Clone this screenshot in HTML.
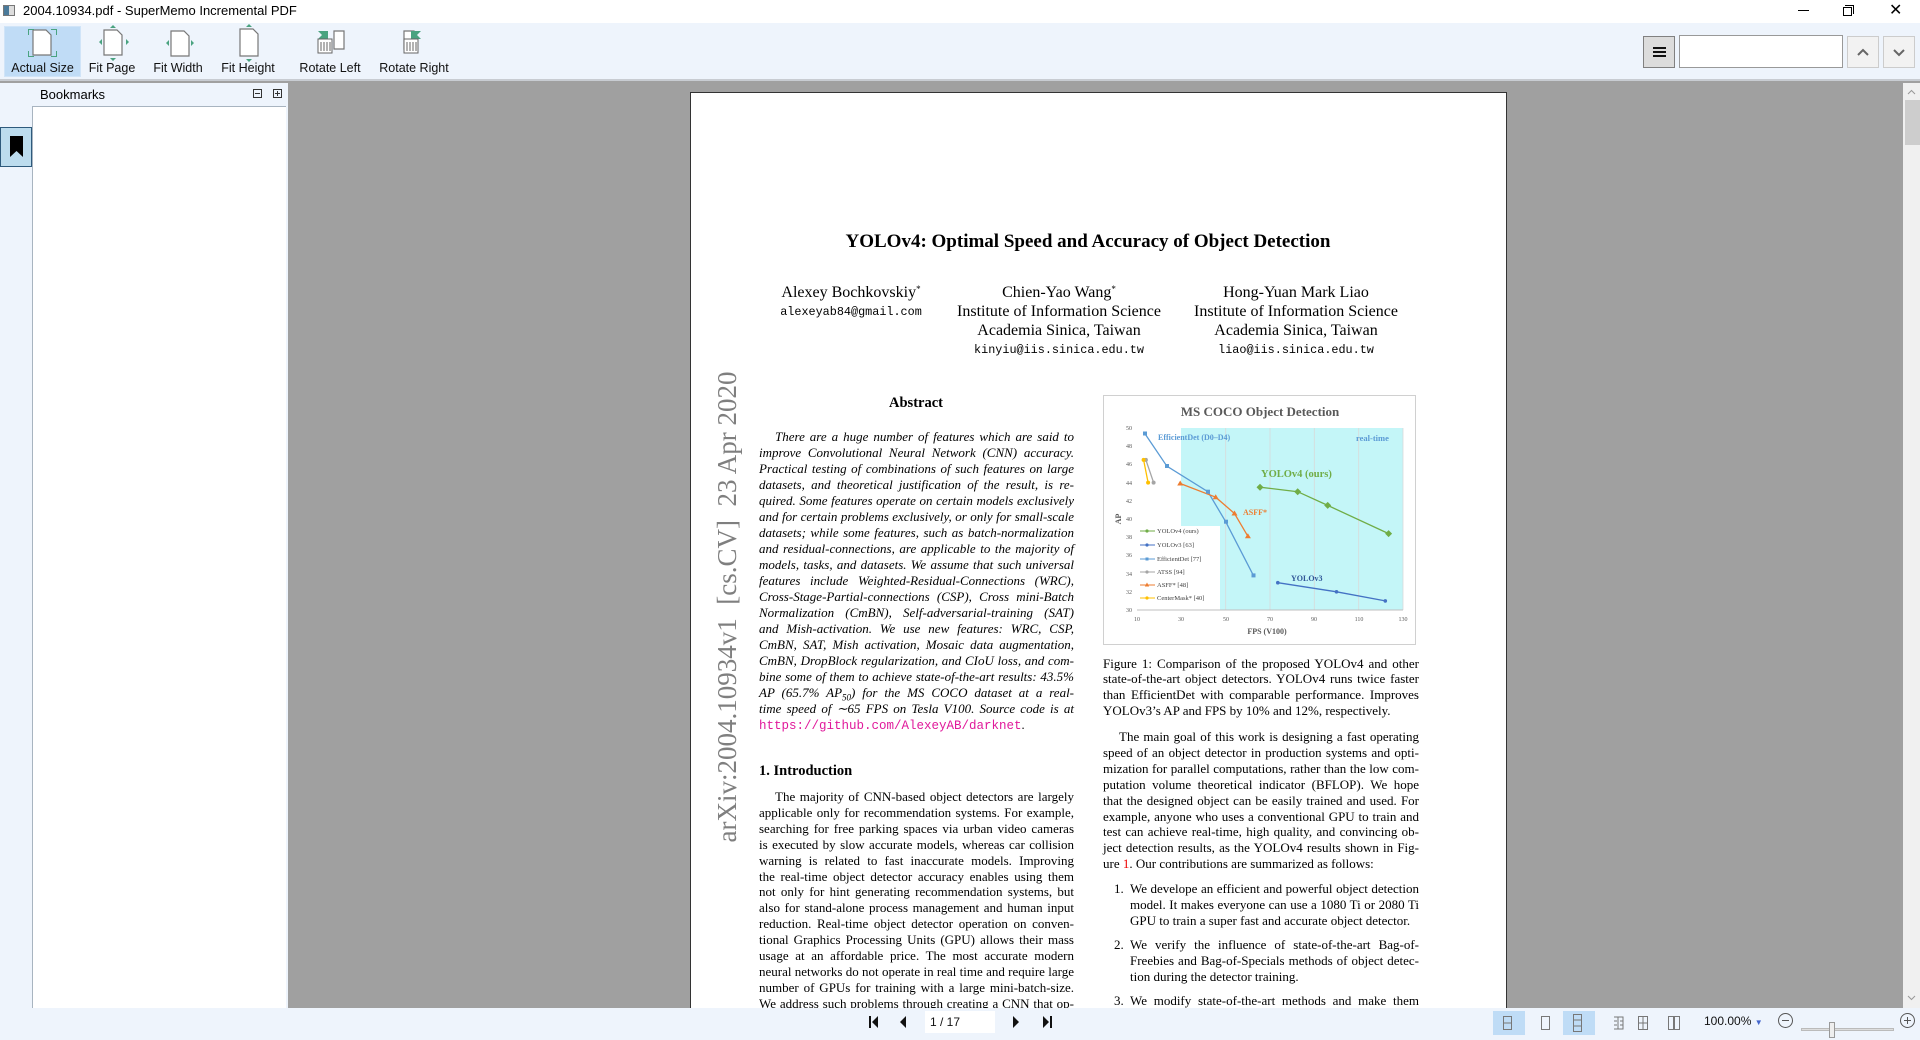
<!DOCTYPE html>
<html><head><meta charset="utf-8"><style>
*{margin:0;padding:0;box-sizing:border-box}
body{width:1920px;height:1040px;overflow:hidden;position:relative;background:#a0a0a0;font-family:"Liberation Sans",sans-serif}
.abs{position:absolute}
.tb{font-size:12.5px;color:#111;text-align:center;position:absolute;top:61px}
#page{position:absolute;left:690px;top:92px;width:817px;height:916px;background:#fff;border:1px solid #333;border-bottom:none;overflow:hidden;font-family:"Liberation Serif",serif;color:#000}
#page div{position:absolute;white-space:nowrap}
.a,.b,.c{height:16px;line-height:16px;font-size:13px;text-align:justify;text-align-last:justify}
.a{left:68px;width:315px}
.a.i{font-style:italic}
.b{left:412px;width:316px}
.c{left:439px;width:289px}
.n{left:423px;font-size:13px;height:16px;line-height:16px}
.ll{text-align-last:left!important;text-align:left!important}
.au{font-size:16px;text-align:center;width:260px;height:20px;line-height:20px}
.au sup{font-size:9px;vertical-align:top;line-height:12px}
.em{font-family:"Liberation Mono",monospace;font-size:11.8px;text-align:center;width:260px;height:16px;line-height:16px}
</style></head><body>
<!-- title bar -->
<div class="abs" style="left:0;top:0;width:1920px;height:23px;background:#fff"></div>
<div class="abs" style="left:3px;top:5px;width:12px;height:11px;border:1px solid #777;background:linear-gradient(90deg,#4a7a9a 50%,#ddd 50%)"></div>
<div class="abs" style="left:23px;top:3px;font-size:13px;color:#000">2004.10934.pdf - SuperMemo Incremental PDF</div>
<div class="abs" style="left:1798px;top:10px;width:11px;height:1px;background:#000"></div>
<div class="abs" style="left:1845px;top:5px;width:9px;height:9px;border:1px solid #000;border-left:none;border-bottom:none"></div>
<div class="abs" style="left:1843px;top:7px;width:9px;height:9px;border:1px solid #000;background:#fff"></div>
<div class="abs" style="left:1889px;top:0px;font-size:16px;color:#000">✕</div>
<!-- toolbar -->
<div class="abs" style="left:0;top:23px;width:1920px;height:58px;background:#eef4fc;border-bottom:2px solid #c8ccd2"></div>
<div class="abs" style="left:4px;top:26px;width:77px;height:51px;background:#c0dcf6;border:1px solid #d0e4f8"></div>
<svg class="abs" style="left:0;top:23px" width="450" height="40">
 <g fill="#fff" stroke="#777" stroke-width="1.2">
  <path d="M33 7h13l5 5v20h-18z"/><path d="M104 7h13l5 5v20h-18z"/><path d="M171 8h13l5 5v20h-18z"/><path d="M240 6h13l5 5v22h-18z"/>
  <path d="M334 8h10v18h-10z"/><path d="M404 8h10v18h-10z"/>
 </g>
 <g fill="#4aa380">
  <path d="M28 6h6v1h-5v5h-1zM51 6h6v6h-1v-5h-5zM28 34h6v-1h-5v-5h-1zM51 34h6v-6h-1v5h-5z"/>
  <path d="M113 2l3 3h-6zM113 38l3-3h-6zM99 19l3-3v6zM129 19l-3-3v6z"/>
  <path d="M166 20l3-3v6zM194 20l-3-3v6z"/>
  <path d="M249 1l3 3h-6zM249 39l3-3h-6z"/>
  <path d="M318 8h10v8h-10l4-4zM421 8h-10v8h10l-4-4z"/>
 </g>
 <g fill="#fff" stroke="#666"><rect x="318" y="16" width="14" height="14"/><rect x="404" y="16" width="14" height="14"/></g>
 <g stroke="#666"><path d="M321 19v9M324 19v9M327 19v9M330 19v9M407 19v9M410 19v9M413 19v9M416 19v9"/></g>
</svg>
<div class="tb" style="left:4px;width:77px">Actual Size</div>
<div class="tb" style="left:82px;width:60px">Fit Page</div>
<div class="tb" style="left:145px;width:66px">Fit Width</div>
<div class="tb" style="left:214px;width:68px">Fit Height</div>
<div class="tb" style="left:294px;width:72px">Rotate Left</div>
<div class="tb" style="left:372px;width:84px">Rotate Right</div>
<div class="abs" style="left:1643px;top:36px;width:32px;height:32px;background:#dcdcdc;border:1px solid #808080"></div>
<div class="abs" style="left:1653px;top:47px;width:13px;height:10px;border-top:2px solid #111;border-bottom:2px solid #111"></div>
<div class="abs" style="left:1653px;top:51px;width:13px;height:2px;background:#111"></div>
<div class="abs" style="left:1679px;top:35px;width:164px;height:33px;background:#fff;border:1px solid #999"></div>
<svg class="abs" style="left:1847px;top:36px" width="68" height="32">
<rect x="0.5" y="0.5" width="31" height="31" fill="#f2f2f2" stroke="#ccc"/><rect x="36.5" y="0.5" width="31" height="31" fill="#f2f2f2" stroke="#ccc"/>
<path d="M11 19l5-5 5 5M47 14l5 5 5-5" fill="none" stroke="#666" stroke-width="2"/></svg>
<!-- left panel -->
<div class="abs" style="left:0;top:83px;width:288px;height:925px;background:#eef4fc"></div>
<div class="abs" style="left:40px;top:87px;font-size:13px;color:#000">Bookmarks</div>
<div class="abs" style="left:253px;top:89px;width:9px;height:9px;border:1px solid #333"><div class="abs" style="left:1px;top:3px;width:5px;height:1px;background:#333"></div></div>
<div class="abs" style="left:273px;top:89px;width:9px;height:9px;border:1px solid #333"><div class="abs" style="left:1px;top:3px;width:5px;height:1px;background:#333"></div><div class="abs" style="left:3px;top:1px;width:1px;height:5px;background:#333"></div></div>
<div class="abs" style="left:32px;top:106px;width:254px;height:902px;background:#fff;border-top:1px solid #a8b4c0;border-left:1px solid #a8b4c0"></div>
<div class="abs" style="left:0;top:127px;width:32px;height:40px;background:#bcdcee;border:1px solid #2e5a7c"></div>
<svg class="abs" style="left:10px;top:136px" width="14" height="22"><path d="M0 0h13v21l-6.5-6-6.5 6z" fill="#000"/></svg>
<!-- scrollbar -->
<div class="abs" style="left:1903px;top:83px;width:17px;height:925px;background:#f0f0f0"></div>
<div class="abs" style="left:1905px;top:100px;width:15px;height:45px;background:#cdcdcd"></div>
<svg class="abs" style="left:1903px;top:83px" width="17" height="925"><path d="M5 11l3.5-3.5 3.5 3.5M5 913l3.5 3.5 3.5-3.5" fill="none" stroke="#999"/></svg>
<!-- page -->
<div id="page">
<div style="left:0;width:794px;top:138px;text-align:center;font-weight:bold;font-size:19px;line-height:22px">YOLOv4: Optimal Speed and Accuracy of Object Detection</div>
<div class="au" style="left:30px;top:190px">Alexey Bochkovskiy<sup>*</sup></div>
<div class="em" style="left:30px;top:211px">alexeyab84@gmail.com</div>
<div class="au" style="left:238px;top:190px">Chien-Yao Wang<sup>*</sup></div>
<div class="au" style="left:238px;top:209px">Institute of Information Science</div>
<div class="au" style="left:238px;top:228px">Academia Sinica, Taiwan</div>
<div class="em" style="left:238px;top:249px">kinyiu@iis.sinica.edu.tw</div>
<div class="au" style="left:475px;top:190px">Hong-Yuan Mark Liao</div>
<div class="au" style="left:475px;top:209px">Institute of Information Science</div>
<div class="au" style="left:475px;top:228px">Academia Sinica, Taiwan</div>
<div class="em" style="left:475px;top:249px">liao@iis.sinica.edu.tw</div>
<div style="left:36px;top:514px;transform:translate(-50%,-50%) rotate(-90deg);font-size:27px;color:#7f7f7f;line-height:30px">arXiv:2004.10934v1&nbsp; [cs.CV]&nbsp; 23 Apr 2020</div>
<div style="left:125px;width:200px;top:302px;text-align:center;font-weight:bold;font-size:14.5px">Abstract</div>
<div class="a i" style="top:336px;left:84px;width:299px">There are a huge number of features which are said to</div>
<div class="a i" style="top:352px">improve Convolutional Neural Network (CNN) accuracy.</div>
<div class="a i" style="top:368px">Practical testing of combinations of such features on large</div>
<div class="a i" style="top:384px">datasets, and theoretical justification of the result, is re-</div>
<div class="a i" style="top:400px">quired. Some features operate on certain models exclusively</div>
<div class="a i" style="top:416px">and for certain problems exclusively, or only for small-scale</div>
<div class="a i" style="top:432px">datasets; while some features, such as batch-normalization</div>
<div class="a i" style="top:448px">and residual-connections, are applicable to the majority of</div>
<div class="a i" style="top:464px">models, tasks, and datasets. We assume that such universal</div>
<div class="a i" style="top:480px">features include Weighted-Residual-Connections (WRC),</div>
<div class="a i" style="top:496px">Cross-Stage-Partial-connections (CSP), Cross mini-Batch</div>
<div class="a i" style="top:512px">Normalization (CmBN), Self-adversarial-training (SAT)</div>
<div class="a i" style="top:528px">and Mish-activation. We use new features: WRC, CSP,</div>
<div class="a i" style="top:544px">CmBN, SAT, Mish activation, Mosaic data augmentation,</div>
<div class="a i" style="top:560px">CmBN, DropBlock regularization, and CIoU loss, and com-</div>
<div class="a i" style="top:576px">bine some of them to achieve state-of-the-art results: 43.5%</div>
<div class="a i" style="top:592px">AP (65.7% AP<sub style="font-size:9px">50</sub>) for the MS COCO dataset at a real-</div>
<div class="a i" style="top:608px">time speed of ∼65 FPS on Tesla V100. Source code is at</div>
<div class="a ll" style="top:624px;font-family:'Liberation Mono',monospace;font-size:12.5px;color:#e0199b">https://github.com/AlexeyAB/darknet<span style="color:#000;font-family:'Liberation Serif',serif">.</span></div>
<div style="left:68px;top:668px;font-weight:bold;font-size:14.5px;line-height:20px">1. Introduction</div>
<div class="a" style="top:696px;left:84px;width:299px">The majority of CNN-based object detectors are largely</div>
<div class="a" style="top:711.9px">applicable only for recommendation systems. For example,</div>
<div class="a" style="top:727.8px">searching for free parking spaces via urban video cameras</div>
<div class="a" style="top:743.7px">is executed by slow accurate models, whereas car collision</div>
<div class="a" style="top:759.6px">warning is related to fast inaccurate models. Improving</div>
<div class="a" style="top:775.5px">the real-time object detector accuracy enables using them</div>
<div class="a" style="top:791.4px">not only for hint generating recommendation systems, but</div>
<div class="a" style="top:807.3px">also for stand-alone process management and human input</div>
<div class="a" style="top:823.2px">reduction. Real-time object detector operation on conven-</div>
<div class="a" style="top:839.1px">tional Graphics Processing Units (GPU) allows their mass</div>
<div class="a" style="top:855px">usage at an affordable price. The most accurate modern</div>
<div class="a" style="top:870.9px">neural networks do not operate in real time and require large</div>
<div class="a" style="top:886.8px">number of GPUs for training with a large mini-batch-size.</div>
<div class="a" style="top:902.7px">We address such problems through creating a CNN that op-</div>
<div class="b" style="top:562.5px">Figure 1: Comparison of the proposed YOLOv4 and other</div>
<div class="b" style="top:578.4px">state-of-the-art object detectors. YOLOv4 runs twice faster</div>
<div class="b" style="top:594.3px">than EfficientDet with comparable performance. Improves</div>
<div class="b ll" style="top:610.2px">YOLOv3’s AP and FPS by 10% and 12%, respectively.</div>
<div class="b" style="top:636px;left:428px;width:300px">The main goal of this work is designing a fast operating</div>
<div class="b" style="top:651.9px">speed of an object detector in production systems and opti-</div>
<div class="b" style="top:667.8px">mization for parallel computations, rather than the low com-</div>
<div class="b" style="top:683.7px">putation volume theoretical indicator (BFLOP). We hope</div>
<div class="b" style="top:699.6px">that the designed object can be easily trained and used. For</div>
<div class="b" style="top:715.5px">example, anyone who uses a conventional GPU to train and</div>
<div class="b" style="top:731.4px">test can achieve real-time, high quality, and convincing ob-</div>
<div class="b" style="top:747.3px">ject detection results, as the YOLOv4 results shown in Fig-</div>
<div class="b ll" style="top:763.2px">ure <span style="color:#e00">1</span>. Our contributions are summarized as follows:</div>
<div class="n" style="top:788px">1.</div>
<div class="c" style="top:788px">We develope an efficient and powerful object detection</div>
<div class="c" style="top:804px">model. It makes everyone can use a 1080 Ti or 2080 Ti</div>
<div class="c ll" style="top:820px">GPU to train a super fast and accurate object detector.</div>
<div class="n" style="top:844px">2.</div>
<div class="c" style="top:844px">We verify the influence of state-of-the-art Bag-of-</div>
<div class="c" style="top:860px">Freebies and Bag-of-Specials methods of object detec-</div>
<div class="c ll" style="top:876px">tion during the detector training.</div>
<div class="n" style="top:900px">3.</div>
<div class="c" style="top:900px">We modify state-of-the-art methods and make them</div>
<svg style="position:absolute;left:0;top:0" width="817" height="916" font-family="Liberation Serif,serif">
<g transform="translate(-691,-92)">
<rect x="1103.5" y="394.5" width="312" height="249" fill="#fff" stroke="#d0d0d0"/>
<text x="1260" y="415" text-anchor="middle" font-size="13" font-weight="bold" fill="#595959">MS COCO Object Detection</text>
<rect x="1181" y="427" width="222" height="182" fill="#c4f6f8"/>
<rect x="1137" y="525" width="83" height="84" fill="#fff"/>
<g stroke="#d9d9d9" stroke-width="0.8"><path d="M1225.7 427V609M1270 427V609M1314.3 427V609M1358.7 427V609M1403 427V609"/></g>
<path d="M1137 609H1403" stroke="#bfbfbf"/>
<g font-size="6" fill="#595959" text-anchor="end">
<text x="1132" y="429">50</text><text x="1132" y="447">48</text><text x="1132" y="465">46</text><text x="1132" y="484">44</text><text x="1132" y="502">42</text><text x="1132" y="520">40</text><text x="1132" y="538">38</text><text x="1132" y="556">36</text><text x="1132" y="575">34</text><text x="1132" y="593">32</text><text x="1132" y="611">30</text></g>
<g font-size="6" fill="#595959" text-anchor="middle">
<text x="1137" y="620">10</text><text x="1181" y="620">30</text><text x="1226" y="620">50</text><text x="1270" y="620">70</text><text x="1314" y="620">90</text><text x="1359" y="620">110</text><text x="1403" y="620">130</text></g>
<text x="1267" y="633" font-size="8" font-weight="bold" fill="#595959" text-anchor="middle">FPS (V100)</text>
<text transform="translate(1121,518) rotate(-90)" font-size="8" font-weight="bold" fill="#595959" text-anchor="middle">AP</text>
<g fill="none" stroke-width="1.3">
<polyline points="1144.8,432.5 1166.9,465.2 1207.9,490.7 1225.7,520.7 1253.4,574.4" stroke="#5b9bd5"/>
<polyline points="1145.9,458.9 1153.6,481.6" stroke="#a5a5a5"/>
<polyline points="1143.6,458.9 1148.1,481.6" stroke="#ffc000"/>
<polyline points="1180.2,482.5 1215.7,496.2 1234.5,512.5 1247.9,535.3" stroke="#ed7d31"/>
<polyline points="1260,486.2 1297.7,490.7 1327.7,504.4 1388.6,532.6" stroke="#70ad47"/>
<polyline points="1277.8,581.7 1336.5,590.8 1385.3,599.9" stroke="#4472c4"/>
</g>
<g fill="#5b9bd5"><rect x="1143" y="430.5" width="4" height="4"/><rect x="1165" y="463" width="4" height="4"/><rect x="1206" y="488.7" width="4" height="4"/><rect x="1224" y="518.7" width="4" height="4"/><rect x="1251.5" y="572.4" width="4" height="4"/></g>
<g fill="#a5a5a5"><circle cx="1145.9" cy="458.9" r="2"/><circle cx="1153.6" cy="481.6" r="2"/></g>
<g fill="#ffc000"><circle cx="1143.6" cy="458.9" r="2"/><circle cx="1148.1" cy="481.6" r="2"/></g>
<g fill="#ed7d31"><path d="M1180.2 479.5l3 5h-6zM1215.7 493.2l3 5h-6zM1234.5 509.5l3 5h-6zM1247.9 532.3l3 5h-6z"/></g>
<g fill="#70ad47"><path d="M1260 482.7l3.5 3.5-3.5 3.5-3.5-3.5zM1297.7 487.2l3.5 3.5-3.5 3.5-3.5-3.5zM1327.7 500.9l3.5 3.5-3.5 3.5-3.5-3.5zM1388.6 529.1l3.5 3.5-3.5 3.5-3.5-3.5z"/></g>
<g fill="#4472c4"><circle cx="1277.8" cy="581.7" r="1.8"/><circle cx="1336.5" cy="590.8" r="1.8"/><circle cx="1385.3" cy="599.9" r="1.8"/></g>
<text x="1158" y="439" font-size="8" font-weight="bold" fill="#5b9bd5">EfficientDet (D0–D4)</text>
<text x="1356" y="440" font-size="8.5" font-weight="bold" fill="#5b9bd5">real-time</text>
<text x="1261" y="476" font-size="10.5" font-weight="bold" fill="#70ad47">YOLOv4 (ours)</text>
<text x="1243" y="514" font-size="8" font-weight="bold" fill="#ed7d31">ASFF*</text>
<text x="1291" y="580" font-size="8" font-weight="bold" fill="#2f5597">YOLOv3</text>
<g font-size="6.5" fill="#404040">
<path d="M1140 530h15" stroke="#70ad47"/><circle cx="1147" cy="530" r="1.6" fill="#70ad47"/><text x="1157" y="532">YOLOv4 (ours)</text>
<path d="M1140 544h15" stroke="#4472c4"/><circle cx="1147" cy="544" r="1.6" fill="#4472c4"/><text x="1157" y="546">YOLOv3 [63]</text>
<path d="M1140 558h15" stroke="#5b9bd5"/><rect x="1145.5" y="556.5" width="3" height="3" fill="#5b9bd5"/><text x="1157" y="560">EfficientDet [77]</text>
<path d="M1140 571h15" stroke="#a5a5a5"/><circle cx="1147" cy="571" r="1.6" fill="#a5a5a5"/><text x="1157" y="573">ATSS [94]</text>
<path d="M1140 584h15" stroke="#ed7d31"/><path d="M1147 581.5l2.2 4h-4.4z" fill="#ed7d31"/><text x="1157" y="586">ASFF* [48]</text>
<path d="M1140 597h15" stroke="#ffc000"/><circle cx="1147" cy="597" r="1.6" fill="#ffc000"/><text x="1157" y="599">CenterMask* [40]</text>
</g>
</g></svg>
</div>
<!-- bottom bar -->
<div class="abs" style="left:0;top:1008px;width:1920px;height:32px;background:#eef4fc"></div>
<svg class="abs" style="left:860px;top:1012px" width="200" height="20">
<g fill="#111"><path d="M9 4h2v12h-2zM18 4v12l-6-6zM46 4v12l-6-6zM153 4v12l6-6zM183 4v12l6-6zM190 4h2v12h-2z"/></g></svg>
<div class="abs" style="left:925px;top:1011px;width:70px;height:22px;background:#fff;font-size:12px;line-height:22px;padding-left:5px;color:#111">1 / 17</div>
<div class="abs" style="left:1493px;top:1011px;width:32px;height:24px;background:#bfdcf6"></div>
<div class="abs" style="left:1563px;top:1011px;width:32px;height:24px;background:#bfdcf6"></div>
<svg class="abs" style="left:1490px;top:1012px" width="200" height="22"><g fill="none" stroke="#777">
<rect x="13.5" y="4.5" width="8" height="13"/><path d="M13 11h9"/>
<rect x="51.5" y="4.5" width="8" height="13"/>
<rect x="83.5" y="2.5" width="8" height="17"/><path d="M83 8h9M83 14h9"/>
<path d="M124 5h9v12h-9M128 5v12M124 9h3M130 9h3M124 13h3M130 13h3"/>
<rect x="148.5" y="4.5" width="9" height="13"/><path d="M148 11h10M153 4v14"/>
<rect x="178.5" y="4.5" width="5" height="13"/><rect x="184.5" y="4.5" width="5" height="13"/></g></svg>
<div class="abs" style="left:1704px;top:1014px;font-size:12px;color:#111">100.00% <span style="font-size:8px;color:#46c">▼</span></div>
<div class="abs" style="left:1778px;top:1013px;width:15px;height:15px;border:1px solid #555;border-radius:50%"><div class="abs" style="left:3px;top:6px;width:7px;height:1px;background:#555"></div></div>
<div class="abs" style="left:1801px;top:1028px;width:93px;height:3px;background:#ddd;border:1px solid #bbb"></div>
<div class="abs" style="left:1829px;top:1022px;width:6px;height:16px;background:#eee;border:1px solid #999"></div>
<div class="abs" style="left:1900px;top:1013px;width:15px;height:15px;border:1px solid #555;border-radius:50%"><div class="abs" style="left:3px;top:6px;width:7px;height:1px;background:#555"></div><div class="abs" style="left:6px;top:3px;width:1px;height:7px;background:#555"></div></div>
</body></html>
